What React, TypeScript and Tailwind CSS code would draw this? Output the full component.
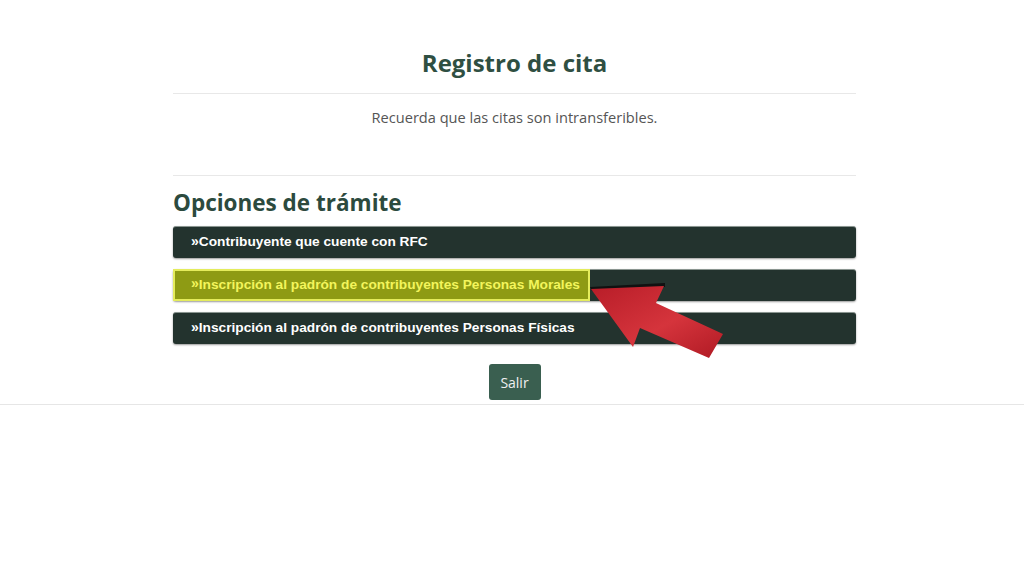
import React from "react";

const options = [
  "Contribuyente que cuente con RFC",
  "Inscripción al padrón de contribuyentes Personas Morales",
  "Inscripción al padrón de contribuyentes Personas Físicas",
];

function Arrow() {
  return (
    <svg
      className="absolute left-0 top-0 pointer-events-none"
      width="1024"
      height="576"
      viewBox="0 0 1024 576"
    >
      <defs>
        <linearGradient id="red" x1="0" y1="0" x2="1" y2="1">
          <stop offset="0" stopColor="#b81d28" />
          <stop offset="0.55" stopColor="#d5343c" />
          <stop offset="1" stopColor="#b01a24" />
        </linearGradient>
      </defs>
      <polygon points="590,287 665,283 665,287 592,291" fill="#111" />
      <polygon
        points="591,289 664,286 656,303 723,334 709,358 640,328 633,347"
        fill="url(#red)"
      />
    </svg>
  );
}

export default function App() {
  return (
    <div
      className="relative w-[1024px] h-[576px] bg-white overflow-hidden"
      style={{ fontFamily: "'Open Sans', sans-serif" }}
    >
      <div className="w-[683px] ml-[173px] pt-[48px]">
        <h1 className="text-center text-[24px] leading-[30px] font-bold text-[#2f4f42]">
          Registro de cita
        </h1>
        <hr className="mt-[15px] border-t border-[#e8e8e8]" />
        <p className="mt-[13px] text-center text-[14.6px] leading-[20px] text-[#555]">
          Recuerda que las citas son intransferibles.
        </p>
        <hr className="mt-[48px] border-t border-[#e8e8e8]" />
        <h2 className="mt-[13px] text-[22.5px] leading-[28px] font-bold text-[#2c4a3e]">
          Opciones de trámite
        </h2>
        <div
          className="mt-[9px] flex flex-col gap-[11px]"
          style={{ fontFamily: "'Liberation Sans', Arial, sans-serif" }}
        >
          {options.map((t, i) => (
            <div
              key={t}
              className="relative h-[32px] bg-[#23332e] rounded-[3px] border-t border-[#8a9590] shadow-[0_1px_2px_rgba(0,0,0,0.4)]"
            >
              {i === 1 ? (
                <div className="absolute left-0 top-[-1px] h-[32px] w-[417px] bg-[#8e9b14] border-2 border-[#e4ec5c] flex items-center pl-[16px] text-[13.7px] font-bold text-[#f3f55c] whitespace-nowrap">
                  <span className="relative top-[-2px] text-[14px] leading-none">»</span>
                  {t}
                </div>
              ) : (
                <div className="h-full flex items-center pl-[18px] text-[13.7px] font-bold text-white whitespace-nowrap">
                  <span className="relative top-[-2px] text-[14px] leading-none">»</span>
                  {t}
                </div>
              )}
            </div>
          ))}
        </div>
        <div className="mt-[20px] flex justify-center">
          <button className="w-[52px] h-[36px] rounded-[3px] bg-[#3a5f50] text-[#f0f0f0] text-[14px]">
            Salir
          </button>
        </div>
      </div>
      <hr className="mt-[4px] border-t border-[#e6e6e6]" />
      <Arrow />
    </div>
  );
}
